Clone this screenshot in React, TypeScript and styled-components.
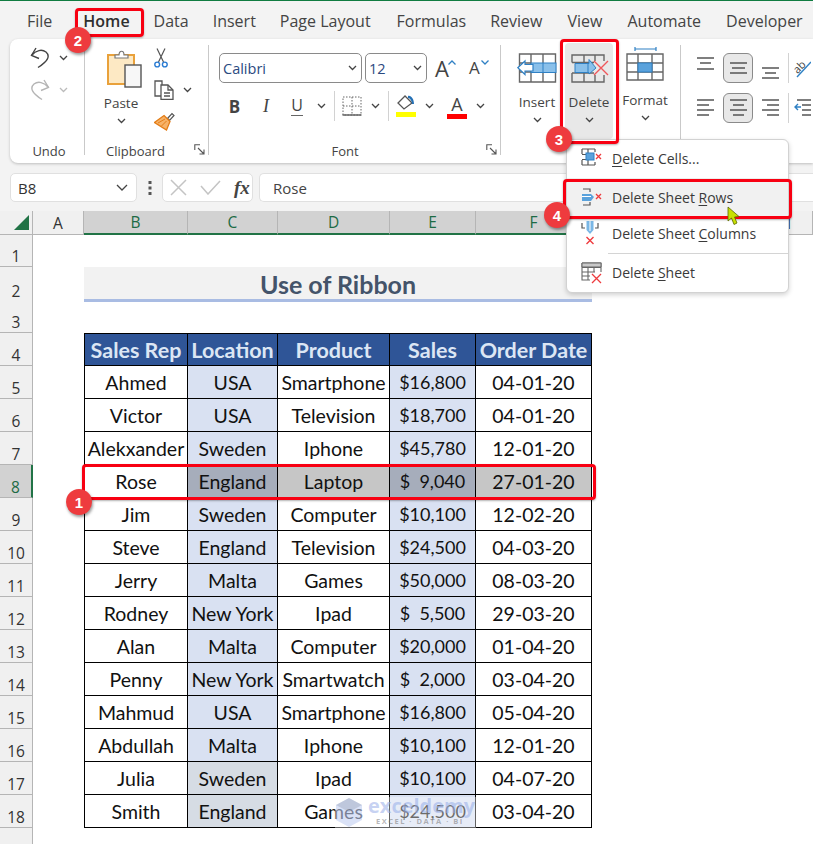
import React from "react";
import styled, { createGlobalStyle } from "styled-components";

const UI_FONT = `"Open Sans", "Noto Sans", sans-serif`;
const CELL_FONT = `Lato, "Liberation Sans", sans-serif`;
const COLUMNS = "33px 51px 104px 90px 112px 86px 116px 167px 54px";

const GlobalStyle = createGlobalStyle`
  html, body {
    margin: 0;
    padding: 0;
    width: 813px;
    height: 844px;
    overflow: hidden;
    background: #f3f3f3;
  }
  * { box-sizing: border-box; }
`;

const Page = styled.div`
  position: relative;
  width: 813px;
  height: 844px;
  overflow: hidden;
  background: #f3f3f3;
  font-family: ${UI_FONT};
  color: #333;
`;

/* top menu */
const MenuBar = styled.div`
  display: flex;
  align-items: center;
  height: 39px;
  padding: 2px 0 0 27px;
  border-top: 1px solid #107c41;
  white-space: nowrap;
`;
const Tab = styled.div<{ $gap: number; $active?: boolean }>`
  margin-right: ${(p) => p.$gap}px;
  font-size: 16px;
  font-weight: ${(p) => (p.$active ? 600 : 400)};
  color: ${(p) => (p.$active ? "#2f2f2f" : "#444")};
`;

/* ribbon */
const Ribbon = styled.div`
  display: flex;
  height: 124px;
  margin-left: 10px;
  background: #fff;
  border-radius: 8px 0 0 8px;
  box-shadow: 0 1px 3px rgba(0, 0, 0, 0.22);
  overflow: hidden;
`;
const Group = styled.div<{ $w: number; $pad?: number; $last?: boolean }>`
  position: relative;
  flex: none;
  display: flex;
  flex-direction: column;
  width: ${(p) => p.$w}px;
  height: 110px;
  margin-top: 6px;
  padding-left: ${(p) => p.$pad ?? 0}px;
  border-right: ${(p) => (p.$last ? "none" : "1px solid #c9c9c9")};
`;
const GroupBody = styled.div`
  flex: 1;
  display: flex;
  min-height: 0;
`;
const GroupLabel = styled.div<{ $shift?: number }>`
  height: 20px;
  margin-left: ${(p) => p.$shift ?? 0}px;
  margin-bottom: -6px;
  text-align: center;
  font-size: 13px;
  line-height: 20px;
  color: #444;
`;
const Launcher = styled.svg`
  position: absolute;
  right: 3px;
  bottom: 0;
  width: 11px;
  height: 11px;
`;

const UndoStack = styled.div`
  display: flex;
  flex-direction: column;
  gap: 9px;
  padding: 1px 0 0 20px;
`;
const IconRow = styled.div<{ $gap?: number }>`
  display: flex;
  align-items: center;
  gap: ${(p) => p.$gap ?? 9}px;
`;
const PasteColumn = styled.div`
  display: flex;
  flex-direction: column;
  align-items: center;
  width: 40px;
  margin-left: 16px;
  padding-top: 5px;
`;
const PasteIcon = styled.svg`
  flex: none;
  width: 35px;
  height: 38px;
  margin-left: 6px;
`;
const BigLabel = styled.div<{ $top?: number }>`
  margin-top: ${(p) => p.$top ?? 9}px;
  font-size: 13.5px;
  line-height: 20px;
  color: #444;
`;
const ChevronBox = styled.svg<{ $top?: number }>`
  flex: none;
  width: 9px;
  height: 6px;
  margin-top: ${(p) => p.$top ?? 0}px;
`;
const ToolStack = styled.div`
  display: flex;
  flex-direction: column;
  gap: 12px;
  margin-left: 13px;
  padding-top: 3px;
`;

const FontRows = styled.div`
  display: flex;
  flex-direction: column;
  gap: 10px;
  padding-top: 8px;
`;
const FontTop = styled.div`
  display: flex;
  align-items: center;
  gap: 3px;
`;
const Combo = styled.div<{ $w: number }>`
  display: flex;
  align-items: center;
  justify-content: space-between;
  width: ${(p) => p.$w}px;
  height: 30px;
  padding: 0 4px 0 3px;
  border: 1px solid #8a8a8a;
  border-radius: 5px;
  background: #fff;
  font-size: 14.5px;
  color: #2b4a7f;
`;
const GrowLetter = styled.div<{ $size: number; $pad: number }>`
  position: relative;
  width: 34px;
  padding-left: ${(p) => p.$pad}px;
  font-size: ${(p) => p.$size}px;
  line-height: 30px;
  color: #444;
`;
const Caret = styled.svg<{ $left: number }>`
  position: absolute;
  top: 7px;
  left: ${(p) => p.$left}px;
  width: 8px;
  height: 5px;
`;
const FontBottom = styled.div`
  display: flex;
  align-items: center;
  height: 26px;
`;
const Slot = styled.div<{ $w: number }>`
  flex: none;
  display: flex;
  align-items: center;
  justify-content: center;
  width: ${(p) => p.$w}px;
  height: 26px;
`;
const Divider = styled.div`
  width: 1px;
  height: 30px;
  background: #d2d2d2;
`;
const BoldB = styled.span`
  font-size: 17px;
  font-weight: 700;
  color: #444;
`;
const ItalicI = styled.span`
  font-family: "Liberation Serif", serif;
  font-size: 18px;
  font-style: italic;
  color: #444;
`;
const UnderU = styled.span`
  font-size: 16px;
  line-height: 19px;
  color: #444;
  border-bottom: 1.5px solid #666;
`;
const ColorLetter = styled.div`
  display: flex;
  flex-direction: column;
  align-items: center;
  width: 20px;
  font-size: 18px;
  line-height: 20px;
  color: #444;
`;
const ColorBar = styled.div<{ $color: string }>`
  width: 20px;
  height: 5px;
  background: ${(p) => p.$color};
`;
const FillWrap = styled.div`
  display: flex;
  flex-direction: column;
  align-items: center;
  width: 20px;
`;

const CellsRow = styled.div`
  display: flex;
  padding-left: 12px;
  gap: 4px;
`;
const BigButton = styled.div<{ $active?: boolean; $lift?: boolean; $w?: number }>`
  display: flex;
  flex-direction: column;
  align-items: center;
  width: 48px;
  height: 96px;
  margin: -2px 0 0 ${(p) => p.$w ?? 0}px;
  padding-top: ${(p) => (p.$lift ? 4 : 10)}px;
  border-radius: 4px;
  background: ${(p) => (p.$active ? "#e8e8e8" : "transparent")};
`;
const BigIcon = styled.svg<{ $tall?: boolean }>`
  flex: none;
  width: 40px;
  height: ${(p) => (p.$tall ? 34 : 30)}px;
`;

const AlignRows = styled.div`
  display: flex;
  flex-direction: column;
  gap: 10px;
  padding-top: 8px;
`;
const AlignRow = styled.div`
  display: flex;
  align-items: center;
  gap: 8px;
  height: 30px;
`;
const AlignSlot = styled.div<{ $on?: boolean; $w: number }>`
  flex: none;
  display: flex;
  align-items: center;
  justify-content: center;
  width: ${(p) => p.$w}px;
  height: 30px;
  border-radius: 6px;
  border: ${(p) => (p.$on ? "1px solid #8a8a8a" : "none")};
  background: ${(p) => (p.$on ? "#e8e8e8" : "transparent")};
`;
const TrailSlot = styled(AlignSlot)`
  margin-left: -3px;
`;
const LinesIcon = styled.svg`
  width: 19px;
  height: 24px;
`;

/* formula bar */
const FormulaBar = styled.div`
  display: flex;
  align-items: stretch;
  height: 29px;
  margin-top: 10px;
  padding-left: 10px;
`;
const Field = styled.div`
  display: flex;
  align-items: center;
  background: #fff;
  border: 1px solid #e0e0e0;
  border-radius: 5px;
  font-size: 15px;
  color: #444;
`;
const NameBox = styled(Field)`
  flex: none;
  justify-content: space-between;
  width: 127px;
  padding: 0 8px 0 7px;
  color: #333;
`;
const GripBox = styled.div`
  flex: none;
  display: flex;
  align-items: center;
  justify-content: center;
  width: 25px;
`;
const FxBox = styled(Field)`
  flex: none;
  width: 91px;
  margin-right: 6px;
  padding-left: 7px;
  gap: 13px;
`;
const FxLabel = styled.span`
  font-family: "Liberation Serif", serif;
  font-size: 19px;
  font-style: italic;
  font-weight: 700;
  color: #444;
`;
const FormulaInput = styled(Field)`
  flex: 1;
  padding-left: 13px;
  border-right: none;
  border-radius: 5px 0 0 5px;
`;

/* sheet */
const Sheet = styled.div`
  margin-top: 9px;
  background: #fff;
`;
const ColHeaders = styled.div`
  display: grid;
  grid-template-columns: ${COLUMNS};
  height: 23px;
`;
const Corner = styled.div`
  position: relative;
  background: #f0f0f0;
  border-right: 1px solid #b5b5b5;
  border-bottom: 1px solid #b5b5b5;
`;
const CornerMark = styled.svg`
  position: absolute;
  left: 14px;
  top: 4px;
  width: 16px;
  height: 16px;
`;
const ColHead = styled.div<{ $on?: boolean }>`
  display: flex;
  align-items: center;
  justify-content: center;
  background: ${(p) => (p.$on ? "#d2d2d2" : "#f0f0f0")};
  border-right: 1px solid #b5b5b5;
  border-bottom: ${(p) => (p.$on ? "2px solid #217346" : "1px solid #b5b5b5")};
  font-size: 15.5px;
  color: ${(p) => (p.$on ? "#1d6b45" : "#333")};
`;
const Row = styled.div`
  display: grid;
  grid-template-columns: ${COLUMNS};
  height: 33px;
`;
const RowHead = styled.div<{ $on?: boolean }>`
  display: flex;
  align-items: flex-end;
  justify-content: center;
  padding-bottom: 1px;
  background: ${(p) => (p.$on ? "#d2d2d2" : "#f0f0f0")};
  border-bottom: 1px solid #b5b5b5;
  border-right: ${(p) => (p.$on ? "2px solid #217346" : "1px solid #b5b5b5")};
  font-size: 15.5px;
  line-height: 18px;
  color: ${(p) => (p.$on ? "#1d6b45" : "#333")};
`;
const Blank = styled.div`
  background: #fff;
`;
const TitleCell = styled.div`
  grid-column: 3 / 8;
  display: flex;
  align-items: center;
  justify-content: center;
  padding-top: 2px;
  background: #f2f2f2;
  border-bottom: 3px solid #a9bce3;
  font-family: ${CELL_FONT};
  font-size: 25px;
  font-weight: 700;
  color: #44546a;
`;

type Tone = "white" | "blue" | "slate" | "steel" | "gray";
const TONES: Record<Tone, string> = {
  white: "#fff",
  blue: "#d9e1f2",
  slate: "#d6dce4",
  steel: "#a6adbb",
  gray: "#c6c6c6",
};
const Cell = styled.div<{ $tone: Tone; $first?: boolean; $money?: boolean }>`
  display: flex;
  align-items: center;
  justify-content: center;
  background: ${(p) => TONES[p.$tone]};
  border-right: 1px solid #000;
  border-bottom: 1px solid #000;
  border-left: ${(p) => (p.$first ? "1px solid #000" : "none")};
  font-family: ${CELL_FONT};
  font-size: ${(p) => (p.$money ? 18 : 19.5)}px;
  color: #111;
  white-space: pre;
`;
const HeadCell = styled.div<{ $first?: boolean }>`
  display: flex;
  align-items: center;
  justify-content: center;
  background: #2f5597;
  border-top: 1px solid #000;
  border-right: 1px solid #000;
  border-bottom: 1px solid #000;
  border-left: ${(p) => (p.$first ? "1px solid #000" : "none")};
  font-family: ${CELL_FONT};
  font-size: 21.5px;
  font-weight: 700;
  color: #dce6f4;
  white-space: nowrap;
`;

/* overlays */
const Highlight = styled.div<{ $x: number; $y: number; $w: number; $h: number }>`
  position: absolute;
  left: ${(p) => p.$x}px;
  top: ${(p) => p.$y}px;
  width: ${(p) => p.$w}px;
  height: ${(p) => p.$h}px;
  border: 3.5px solid #f80012;
  border-radius: 4px;
  box-shadow: 0 1px 2px rgba(0, 0, 0, 0.3);
`;
const Badge = styled.div<{ $x: number; $y: number }>`
  position: absolute;
  left: ${(p) => p.$x - 13}px;
  top: ${(p) => p.$y - 13}px;
  width: 26px;
  height: 26px;
  display: flex;
  align-items: center;
  justify-content: center;
  border-radius: 50%;
  background: #ee3b3e;
  box-shadow: 1px 2px 3px rgba(0, 0, 0, 0.4);
  font-family: "Liberation Sans", sans-serif;
  font-size: 15px;
  font-weight: 700;
  color: #fff;
`;
const DropMenu = styled.div`
  position: absolute;
  left: 566px;
  top: 139px;
  width: 223px;
  height: 154px;
  padding-top: 1px;
  background: #fff;
  border: 1px solid #d2d2d2;
  border-radius: 6px;
  box-shadow: 0 2px 5px rgba(0, 0, 0, 0.18);
`;
const MenuItem = styled.div<{ $h: number; $top?: number; $hover?: boolean }>`
  display: flex;
  align-items: center;
  height: ${(p) => p.$h}px;
  margin-top: ${(p) => p.$top ?? 0}px;
  padding-left: 14px;
  gap: 10px;
  background: ${(p) => (p.$hover ? "#f1f1f1" : "transparent")};
  font-size: 14px;
  color: #3a3a3a;
  white-space: nowrap;
`;
const MenuIcon = styled.svg`
  flex: none;
  width: 21px;
  height: 24px;
`;
const MenuRule = styled.div`
  height: 1px;
  margin: 3px 0 0 41px;
  background: #d4d4d4;
`;
const Key = styled.span`
  text-decoration: underline;
  text-underline-offset: 2px;
`;
const Pointer = styled.svg`
  position: absolute;
  left: 727px;
  top: 206px;
  width: 13px;
  height: 20px;
`;
const Watermark = styled.div`
  position: absolute;
  left: 335px;
  top: 797px;
  display: flex;
  gap: 5px;
  width: 141px;
  height: 31px;
  background: rgba(255, 255, 255, 0.38);
`;
const WatermarkLogo = styled.svg`
  flex: none;
  width: 28px;
  height: 31px;
`;
const WatermarkText = styled.div`
  display: flex;
  flex-direction: column;
  margin-top: -2px;
`;
const WatermarkName = styled.div`
  font-family: ${UI_FONT};
  font-size: 20px;
  font-weight: 700;
  line-height: 22px;
  color: rgba(150, 172, 232, 0.55);
`;
const WatermarkTag = styled.div`
  margin-left: 8px;
  font-family: ${UI_FONT};
  font-size: 7.5px;
  font-weight: 700;
  letter-spacing: 1.5px;
  line-height: 9px;
  color: rgba(120, 120, 120, 0.55);
  white-space: nowrap;
`;

/* drawings */
const GRAY = "#555";

const Chevron = ({ faint, top }: { faint?: boolean; top?: number }) => (
  <ChevronBox viewBox="0 0 9 6" $top={top}>
    <polyline points="1,1 4.5,4.5 8,1" fill="none" stroke={faint ? "#bbb" : "#444"} strokeWidth="1.3" />
  </ChevronBox>
);

const UndoArrow = ({ redo }: { redo?: boolean }) => (
  <svg width="20" height="23" viewBox="0 0 20 23" fill="none" stroke={redo ? "#b5b5b5" : "#444"} strokeWidth="1.4">
    <g transform={redo ? "translate(20,0) scale(-1,1)" : undefined}>
      <path d="M6 2 L1.5 9.5 L9 12.5" />
      <path d="M1.5 9.5 C6 4 12 3 16 6 C20.5 10 18 15 8 21.5" />
    </g>
  </svg>
);

const Scissors = () => (
  <svg width="14" height="20" viewBox="0 0 14 20" fill="none">
    <path d="M3 0.5 L9.5 14 M11 0.5 L4.5 14" stroke="#555" strokeWidth="1.2" />
    <circle cx="3.2" cy="16.5" r="2.4" stroke="#2b7cd3" strokeWidth="1.4" />
    <circle cx="10.8" cy="16.5" r="2.4" stroke="#2b7cd3" strokeWidth="1.4" />
  </svg>
);

const CopyIcon = () => (
  <svg width="20" height="20" viewBox="0 0 20 20" fill="#fff" stroke={GRAY} strokeWidth="1.3">
    <path d="M1 1 H8 V16 H1 Z" />
    <path d="M7 5 H14 L19 10 V19.5 H7 Z" />
    <path d="M14 5 V10 H19 M10 13 H16 M10 16 H16" fill="none" />
  </svg>
);

const BrushIcon = () => (
  <svg width="21" height="19" viewBox="0 0 21 19">
    <path d="M13.5 6.5 L18 1.5 L20 3.5 L15.5 8.5 Z" fill="#fff" stroke="#555" strokeWidth="1.2" />
    <path d="M10 3.5 L16 9.5 L12.5 18 L0.5 10.5 Z" fill="#f7b267" stroke="#e37d17" strokeWidth="1.3" />
    <path d="M4 11 L11 7 M7.5 14 L12.5 9" stroke="#e37d17" strokeWidth="1" />
  </svg>
);

const BorderIcon = () => (
  <svg width="20" height="20" viewBox="0 0 20 20" fill="none" stroke="#666">
    <path d="M1 1 H19 V19 H1 Z M1 10 H19 M10 1 V19" strokeDasharray="1.5 1.5" />
    <path d="M0.5 19 H19.5" strokeWidth="1.6" />
  </svg>
);

const FillIcon = () => (
  <svg width="20" height="17" viewBox="0 0 20 17">
    <path d="M9 1 L2 8 L8 14 L16 8 Z" fill="#fff" stroke="#555" strokeWidth="1.3" />
    <path d="M12 1 C15 0 18 4 18 9 L16 9 C16 6 14 3 12 3 Z" fill="#2470b5" />
  </svg>
);

const InsertIcon = () => (
  <BigIcon viewBox="0 0 40 30" fill="none">
    <path d="M2.5 1 H38.5 V29 H2.5 Z M2.5 10 H14 M2.5 19 H14 M14 1 V29 M26 1 V29" stroke="#666" strokeWidth="1.4" />
    <rect x="14" y="10" width="25" height="9.5" fill="#8ac0ea" stroke="#2f80c4" />
    <path d="M26 10 V19.5" stroke="#2f80c4" />
    <path d="M0.8 14.7 L8 8 V11.5 H16 V18 H8 V21.5 Z" fill="#fff" stroke="#2f80c4" strokeWidth="1.2" />
  </BigIcon>
);

const DeleteIcon = () => (
  <BigIcon viewBox="0 0 40 30" fill="none">
    <path d="M3 9.5 V2 H35 V9.5 M3 20 V29 H35 V20 M3 9.5 H35 M3 20 H28 M15 2 V9.5 M26 2 V9.5 M15 20 V29 M26 20 V29" stroke="#666" strokeWidth="1.4" />
    <rect fill="#e8e8e8" x="25" y="8" width="15" height="14" />
    <path d="M6 10.5 H20 V6.5 L27 15 L20 21 V19.5 H6 Z" fill="#8ac0ea" stroke="#2f80c4" />
    <path d="M19 10.5 V19.5" stroke="#2f80c4" />
    <path d="M25 8 L39 22 M39 8 L25 22" stroke="#f0565a" strokeWidth="1.4" />
  </BigIcon>
);

const FormatIcon = () => (
  <BigIcon viewBox="0 0 40 34" fill="none" $tall>
    <path d="M10 0 V4 M31 0 V4 M10 2 H31" stroke="#2f80c4" strokeWidth="1.2" />
    <path d="M2 7 H38 V33 H2 Z M2 16 H38 M2 25 H38 M13 7 V33 M27 7 V33" stroke="#666" strokeWidth="1.4" />
    <rect x="13" y="16" width="14" height="9" fill="#5aa2dc" stroke="#2f80c4" />
  </BigIcon>
);

const Lines = ({ rows }: { rows: [number, number, number][] }) => (
  <LinesIcon viewBox="0 0 19 24" stroke={GRAY} strokeWidth="1.3">
    {rows.map(([y, a, b]) => (
      <line key={y} x1={a} x2={b} y1={y} y2={y} />
    ))}
  </LinesIcon>
);

const LauncherMark = () => (
  <Launcher viewBox="0 0 11 11" fill="none" stroke="#555" strokeWidth="1.1">
    <path d="M6 0.8 H0.8 V6 M4 4 L10 10 M10 5.5 V10 H5.5" />
  </Launcher>
);

const SmallTable = ({ kind }: { kind: "cells" | "rows" | "cols" | "sheet" }) => (
  <MenuIcon viewBox="0 0 21 24" fill="none">
    {kind === "cells" && (
      <>
        <path d="M1 3 H14 M1 19 H14 M1 3 V8 M1 14 V19 M7 3 V8 M14 3 V6 M7 14 V19 M14 16 V19 M1 8.5 H5 M1 13.5 H5" stroke="#555" strokeWidth="1.2" />
        <rect x="5" y="7" width="8" height="7" fill="#5aa2dc" stroke="#2f80c4" />
        <path d="M15 8 L20 13 M20 8 L15 13" stroke="#ee3b3e" strokeWidth="1.3" />
      </>
    )}
    {kind === "rows" && (
      <>
        <path d="M2 4 H9 V7 M2 20 H9 V17" stroke="#555" strokeWidth="1.2" />
        <path d="M1 9 H10 L13 12 L10 16 H1 Z" fill="#5aa2dc" />
        <path d="M1 11.5 H10" stroke="#fff" />
        <path d="M15 9 L20 14 M20 9 L15 14" stroke="#ee3b3e" strokeWidth="1.3" />
      </>
    )}
    {kind === "cols" && (
      <>
        <path d="M1 2 V7 H4 M17 2 V7 H14" stroke="#555" strokeWidth="1.2" />
        <path d="M5.5 0 H12.5 V9 L9 13 L5.5 9 Z" fill="#7ab7e6" />
        <path d="M9 0 V10" stroke="#fff" />
        <path d="M5.5 16 L12.5 23 M12.5 16 L5.5 23" stroke="#ee3b3e" strokeWidth="1.4" />
      </>
    )}
    {kind === "sheet" && (
      <>
        <path d="M1 3 H20 V12 M1 3 V20 H9 M1 7.5 H20 M1 12 H14 M1 16 H9 M7 3 V20 M13 3 V12" stroke="#666" strokeWidth="1.1" />
        <path d="M1 3 H20 V7 H1 Z" fill="#c9c9c9" stroke="#666" />
        <path d="M11 14 L20 23 M20 14 L11 23" stroke="#ee3b3e" strokeWidth="1.3" />
      </>
    )}
  </MenuIcon>
);

const TABS: { label: string; gap: number; active?: boolean }[] = [
  { label: "File", gap: 31 },
  { label: "Home", gap: 24, active: true },
  { label: "Data", gap: 24 },
  { label: "Insert", gap: 24 },
  { label: "Page Layout", gap: 26 },
  { label: "Formulas", gap: 24 },
  { label: "Review", gap: 25 },
  { label: "View", gap: 25 },
  { label: "Automate", gap: 25 },
  { label: "Developer", gap: 0 },
];

const COL_LETTERS = ["A", "B", "C", "D", "E", "F", "G", "H"];

type Sale = { rep: string; loc: string; prod: string; sales: string; date: string; locTone?: Tone };
const SALES: Sale[] = [
  { rep: "Ahmed", loc: "USA", prod: "Smartphone", sales: "$16,800", date: "04-01-20" },
  { rep: "Victor", loc: "USA", prod: "Television", sales: "$18,700", date: "04-01-20" },
  { rep: "Alekxander", loc: "Sweden", prod: "Iphone", sales: "$45,780", date: "12-01-20" },
  { rep: "Rose", loc: "England", prod: "Laptop", sales: "$  9,040", date: "27-01-20" },
  { rep: "Jim", loc: "Sweden", prod: "Computer", sales: "$10,100", date: "12-02-20" },
  { rep: "Steve", loc: "England", prod: "Television", sales: "$24,500", date: "04-03-20" },
  { rep: "Jerry", loc: "Malta", prod: "Games", sales: "$50,000", date: "08-03-20" },
  { rep: "Rodney", loc: "New York", prod: "Ipad", sales: "$  5,500", date: "29-03-20" },
  { rep: "Alan", loc: "Malta", prod: "Computer", sales: "$20,000", date: "01-04-20" },
  { rep: "Penny", loc: "New York", prod: "Smartwatch", sales: "$  2,000", date: "03-04-20" },
  { rep: "Mahmud", loc: "USA", prod: "Smartphone", sales: "$16,800", date: "05-04-20" },
  { rep: "Abdullah", loc: "Malta", prod: "Iphone", sales: "$10,100", date: "12-01-20" },
  { rep: "Julia", loc: "Sweden", prod: "Ipad", sales: "$10,100", date: "04-07-20", locTone: "slate" },
  { rep: "Smith", loc: "England", prod: "Games", sales: "$24,500", date: "03-04-20", locTone: "slate" },
];

export default function App() {
  return (
    <Page>
      <GlobalStyle />
      <MenuBar>
        {TABS.map((t) => (
          <Tab key={t.label} $gap={t.gap} $active={t.active}>
            {t.label}
          </Tab>
        ))}
      </MenuBar>

      <Ribbon>
        <Group $w={75}>
          <GroupBody>
            <UndoStack>
              <IconRow>
                <UndoArrow />
                <Chevron />
              </IconRow>
              <IconRow>
                <UndoArrow redo />
                <Chevron faint />
              </IconRow>
            </UndoStack>
          </GroupBody>
          <GroupLabel $shift={4}>Undo</GroupLabel>
        </Group>

        <Group $w={124}>
          <GroupBody>
            <PasteColumn>
              <PasteIcon viewBox="0 0 35 38">
                <rect x="1" y="5" width="26" height="29" fill="#fde9c4" stroke="#e9a13b" strokeWidth="2" />
                <path d="M8 8 V5 H12 C12 0 17 0 17 5 H21 V8 Z" fill="#fff" stroke="#777" strokeWidth="1.2" />
                <rect x="18" y="15" width="16" height="22" fill="#f7f7f7" stroke="#555" strokeWidth="1.4" />
              </PasteIcon>
              <BigLabel $top={5}>Paste</BigLabel>
              <Chevron top={5} />
            </PasteColumn>
            <ToolStack>
              <IconRow>
                <Scissors />
              </IconRow>
              <IconRow $gap={9}>
                <CopyIcon />
                <Chevron />
              </IconRow>
              <IconRow>
                <BrushIcon />
              </IconRow>
            </ToolStack>
          </GroupBody>
          <GroupLabel $shift={-22}>Clipboard</GroupLabel>
          <LauncherMark />
        </Group>

        <Group $w={292} $pad={10}>
          <GroupBody>
            <FontRows>
              <FontTop>
                <Combo $w={143}>
                  Calibri
                  <Chevron />
                </Combo>
                <Combo $w={62}>
                  12
                  <Chevron />
                </Combo>
                <GrowLetter $size={22} $pad={5}>
                  A
                  <Caret $left={18} viewBox="0 0 8 5">
                    <polyline points="0.5,4.5 4,1 7.5,4.5" fill="none" stroke="#2f80c4" strokeWidth="1.3" />
                  </Caret>
                </GrowLetter>
                <GrowLetter $size={17} $pad={2}>
                  A
                  <Caret $left={14} viewBox="0 0 8 5">
                    <polyline points="0.5,0.5 4,4 7.5,0.5" fill="none" stroke="#2f80c4" strokeWidth="1.3" />
                  </Caret>
                </GrowLetter>
              </FontTop>
              <FontBottom>
                <Slot $w={31}>
                  <BoldB>B</BoldB>
                </Slot>
                <Slot $w={32}>
                  <ItalicI>I</ItalicI>
                </Slot>
                <Slot $w={30}>
                  <UnderU>U</UnderU>
                </Slot>
                <Slot $w={18}>
                  <Chevron />
                </Slot>
                <Slot $w={8}>
                  <Divider />
                </Slot>
                <Slot $w={28}>
                  <BorderIcon />
                </Slot>
                <Slot $w={18}>
                  <Chevron />
                </Slot>
                <Slot $w={8}>
                  <Divider />
                </Slot>
                <Slot $w={28}>
                  <FillWrap>
                    <FillIcon />
                    <ColorBar $color="#ffff00" />
                  </FillWrap>
                </Slot>
                <Slot $w={18}>
                  <Chevron />
                </Slot>
                <Slot $w={38}>
                  <ColorLetter>
                    A
                    <ColorBar $color="#ff0000" />
                  </ColorLetter>
                </Slot>
                <Slot $w={8}>
                  <Chevron />
                </Slot>
              </FontBottom>
            </FontRows>
          </GroupBody>
          <GroupLabel $shift={-29}>Font</GroupLabel>
          <LauncherMark />
        </Group>

        <Group $w={180}>
          <CellsRow>
            <BigButton>
              <InsertIcon />
              <BigLabel>Insert</BigLabel>
              <Chevron top={5} />
            </BigButton>
            <BigButton $active>
              <DeleteIcon />
              <BigLabel>Delete</BigLabel>
              <Chevron top={5} />
            </BigButton>
            <BigButton $lift $w={4}>
              <FormatIcon />
              <BigLabel>Format</BigLabel>
              <Chevron top={5} />
            </BigButton>
          </CellsRow>
        </Group>

        <Group $w={132} $pad={15} $last>
          <AlignRows>
            <AlignRow>
              <AlignSlot $w={19}>
                <Lines rows={[[2, 1, 18], [7, 4, 15], [13, 1, 18]]} />
              </AlignSlot>
              <AlignSlot $w={30} $on>
                <Lines rows={[[7, 1, 18], [12, 3, 16], [17, 1, 18]]} />
              </AlignSlot>
              <AlignSlot $w={19}>
                <Lines rows={[[12, 1, 18], [17, 4, 15], [22, 1, 18]]} />
              </AlignSlot>
              <Divider />
              <TrailSlot $w={17}>
                <svg width="17" height="24" viewBox="0 0 17 24" fill="none">
                  <text x="0" y="14" transform="rotate(-45 7 12)" fontSize="11" fill="#444" fontFamily="Open Sans, sans-serif">
                    ab
                  </text>
                  <path d="M3 21 L17 6" stroke="#2f80c4" strokeWidth="1.4" />
                </svg>
              </TrailSlot>
            </AlignRow>
            <AlignRow>
              <AlignSlot $w={19}>
                <Lines rows={[[4, 1, 18], [9, 1, 13], [14, 1, 18], [19, 1, 13]]} />
              </AlignSlot>
              <AlignSlot $w={30} $on>
                <Lines rows={[[4, 1, 18], [9, 4, 15], [14, 1, 18], [19, 4, 15]]} />
              </AlignSlot>
              <AlignSlot $w={19}>
                <Lines rows={[[4, 1, 18], [9, 6, 18], [14, 1, 18], [19, 6, 18]]} />
              </AlignSlot>
              <Divider />
              <TrailSlot $w={17}>
                <svg width="17" height="24" viewBox="0 0 17 24" fill="none">
                  <path d="M8 9 H17 M8 14 H17 M8 19 H17 M3 4 H17" stroke={GRAY} strokeWidth="1.3" />
                  <path d="M1 11 H7 M4 8 L1 11 L4 14" stroke="#2f80c4" strokeWidth="1.4" />
                </svg>
              </TrailSlot>
            </AlignRow>
          </AlignRows>
        </Group>
      </Ribbon>

      <FormulaBar>
        <NameBox>
          B8
          <svg width="12" height="7" viewBox="0 0 12 7" fill="none" stroke="#444" strokeWidth="1.3">
            <polyline points="1,1 6,6 11,1" />
          </svg>
        </NameBox>
        <GripBox>
          <svg width="4" height="14" viewBox="0 0 4 14" fill="#555">
            <rect x="0.5" y="0" width="3" height="3" />
            <rect x="0.5" y="5.5" width="3" height="3" />
            <rect x="0.5" y="11" width="3" height="3" />
          </svg>
        </GripBox>
        <FxBox>
          <svg width="17" height="17" viewBox="0 0 17 17" fill="none" stroke="#c4c4c4" strokeWidth="1.5">
            <path d="M1 1 L16 16 M16 1 L1 16" />
          </svg>
          <svg width="21" height="15" viewBox="0 0 21 15" fill="none" stroke="#c4c4c4" strokeWidth="1.5">
            <path d="M1 6 L8 14 L20 1" />
          </svg>
          <FxLabel>fx</FxLabel>
        </FxBox>
        <FormulaInput>Rose</FormulaInput>
      </FormulaBar>

      <Sheet>
        <ColHeaders>
          <Corner>
            <CornerMark viewBox="0 0 16 16">
              <polygon points="15,0 15,15 0,15" fill="#217346" />
            </CornerMark>
          </Corner>
          {COL_LETTERS.map((c) => (
            <ColHead key={c} $on={c >= "B" && c <= "F"}>
              {c}
            </ColHead>
          ))}
        </ColHeaders>

        <Row>
          <RowHead>1</RowHead>
        </Row>
        <Row>
          <RowHead>2</RowHead>
          <Blank />
          <TitleCell>Use of Ribbon</TitleCell>
        </Row>
        <Row>
          <RowHead>3</RowHead>
        </Row>
        <Row>
          <RowHead>4</RowHead>
          <Blank />
          <HeadCell $first>Sales Rep</HeadCell>
          <HeadCell>Location</HeadCell>
          <HeadCell>Product</HeadCell>
          <HeadCell>Sales</HeadCell>
          <HeadCell>Order Date</HeadCell>
        </Row>
        {SALES.map((s, i) => {
          const picked = s.rep === "Rose";
          return (
            <Row key={s.rep}>
              <RowHead $on={picked}>{i + 5}</RowHead>
              <Blank />
              <Cell $tone="white" $first>
                {s.rep}
              </Cell>
              <Cell $tone={picked ? "steel" : s.locTone ?? "blue"}>{s.loc}</Cell>
              <Cell $tone={picked ? "gray" : "white"}>{s.prod}</Cell>
              <Cell $tone={picked ? "steel" : "blue"} $money>
                {s.sales}
              </Cell>
              <Cell $tone={picked ? "gray" : "white"}>{s.date}</Cell>
            </Row>
          );
        })}
        <Row>
          <RowHead />
        </Row>
      </Sheet>

      <Watermark>
        <WatermarkLogo viewBox="0 0 28 31">
          <polygon points="14,1 27,8 27,23 14,30 1,23 1,8" fill="rgba(150,172,232,0.35)" />
          <polygon points="14,1 27,8 14,15 1,8" fill="rgba(120,130,150,0.28)" />
        </WatermarkLogo>
        <WatermarkText>
          <WatermarkName>exceldemy</WatermarkName>
          <WatermarkTag>EXCEL · DATA · BI</WatermarkTag>
        </WatermarkText>
      </Watermark>

      <DropMenu>
        <MenuItem $h={34}>
          <SmallTable kind="cells" />
          <span>
            <Key>D</Key>elete Cells...
          </span>
        </MenuItem>
        <MenuItem $h={38} $top={3} $hover>
          <SmallTable kind="rows" />
          <span>
            Delete Sheet <Key>R</Key>ows
          </span>
        </MenuItem>
        <MenuItem $h={34}>
          <SmallTable kind="cols" />
          <span>
            Delete Sheet <Key>C</Key>olumns
          </span>
        </MenuItem>
        <MenuRule />
        <MenuItem $h={36}>
          <SmallTable kind="sheet" />
          <span>
            Delete <Key>S</Key>heet
          </span>
        </MenuItem>
      </DropMenu>

      <Highlight $x={75} $y={8} $w={69} $h={29} />
      <Highlight $x={560} $y={39} $w={59} $h={105} />
      <Highlight $x={563} $y={179} $w={229} $h={40} />
      <Highlight $x={82} $y={464} $w={514} $h={36} />

      <Pointer viewBox="0 0 13 20">
        <path d="M1 1 L1 15 L4.5 12 L7 18.5 L10 17 L7.5 11 L12 10.5 Z" fill="#c8e000" stroke="#5a6a00" strokeWidth="0.8" />
      </Pointer>

      <Badge $x={79} $y={502}>1</Badge>
      <Badge $x={78} $y={40}>2</Badge>
      <Badge $x={559} $y={139}>3</Badge>
      <Badge $x={557} $y={215}>4</Badge>
    </Page>
  );
}
